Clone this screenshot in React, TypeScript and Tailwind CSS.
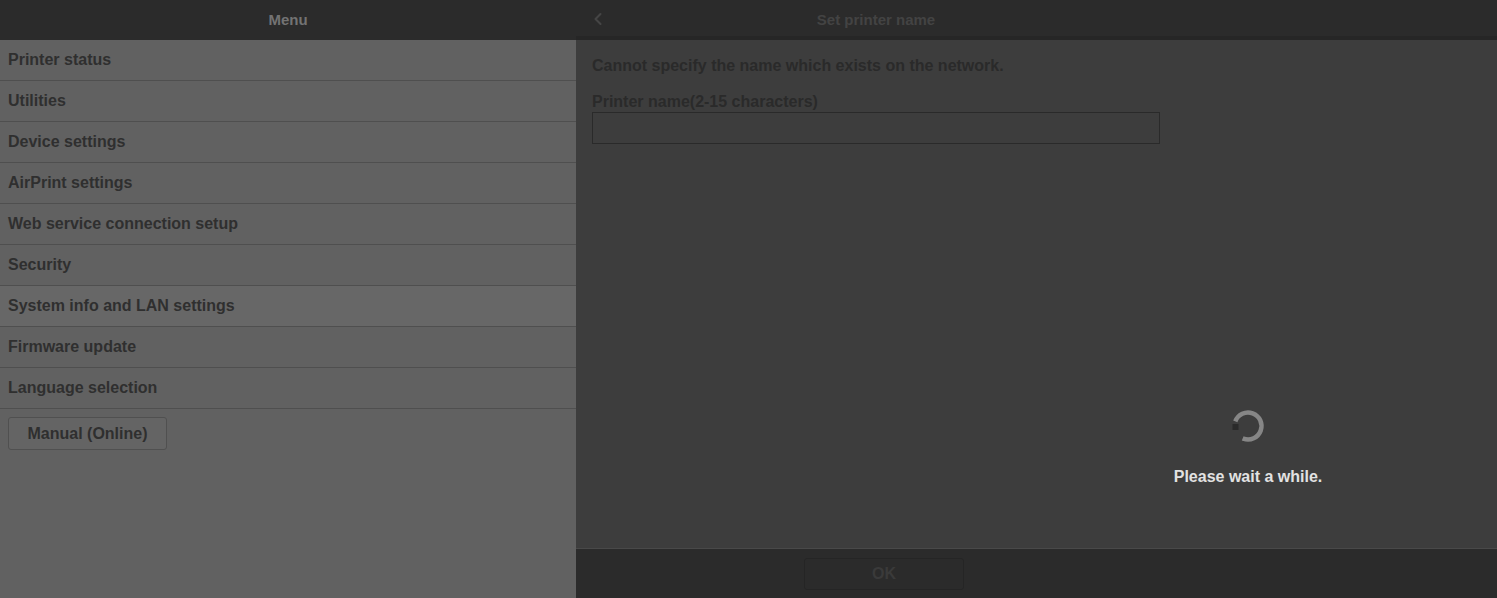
import { ChevronLeft } from "lucide-react"

const MENU = [
  "Printer status",
  "Utilities",
  "Device settings",
  "AirPrint settings",
  "Web service connection setup",
  "Security",
  "System info and LAN settings",
  "Firmware update",
  "Language selection",
]

export default function App() {
  return (
    <div
      className="flex h-[598px] w-[1497px] overflow-hidden text-[16px] font-bold"
      style={{ fontFamily: '"Liberation Sans", Arial, sans-serif' }}
    >
      {/* left menu */}
      <div className="flex w-[576px] shrink-0 flex-col bg-[#616161]">
        <div className="flex h-[40px] items-center justify-center bg-[#2b2b2b] text-[15px] text-[#737373]">
          Menu
        </div>
        {MENU.map((m, i) => (
          <div
            key={m}
            className={
              "flex h-[41px] items-center border-b border-[#4f4f4f] px-2 text-[#2f2f2f] " +
              (i === 6 ? "bg-[#676767]" : "bg-[#616161]")
            }
          >
            {m}
          </div>
        ))}
        <div className="px-2 pt-2">
          <button className="h-[33px] w-[159px] rounded-[3px] border border-[#505050] bg-[#646464] text-[16px] font-bold text-[#2f2f2f]">
            Manual (Online)
          </button>
        </div>
      </div>

      {/* right panel */}
      <div className="flex flex-1 flex-col bg-[#3d3d3d]">
        <div className="relative flex h-[40px] items-center bg-[#2b2b2b] text-[15px] text-[#434343] shadow-[inset_0_-4px_0_#262626]">
          <ChevronLeft className="absolute left-[12px] top-[9px] h-[20px] w-[20px] text-[#454545]" strokeWidth={2.5} />
          <div className="flex w-[600px] justify-center">Set printer name</div>
        </div>
        <div className="flex flex-1 flex-col px-4 pt-[17px] text-[#2a2a2a]">
          <div className="leading-[18px]">Cannot specify the name which exists on the network.</div>
          <div className="mt-[18px] leading-[18px]">Printer name(2-15 characters)</div>
          <div className="mt-[1px] h-[32px] w-[568px] border border-[#2a2a2a] bg-[#3d3d3d]" />
          <div className="flex flex-1 flex-col items-start justify-end pb-[62px] pl-[556px]">
            <div className="flex w-[200px] flex-col items-center">
              <svg width="36" height="36" viewBox="0 0 36 36">
                <circle cx="18" cy="18" r="13.5" fill="none" stroke="#868686" strokeWidth="4.5" strokeDasharray="64 21" transform="rotate(200 18 18)" />
                <rect x="2.5" y="16" width="6" height="6" fill="#2a2a2a" />
              </svg>
              <div className="mt-[24px] whitespace-nowrap leading-[18px] text-[#e2e2e2]">Please wait a while.</div>
            </div>
          </div>
        </div>
        <div className="flex h-[50px] items-center border-t border-[#494949] bg-[#2b2b2b] pl-[228px]">
          <div className="flex h-[32px] w-[160px] items-center justify-center rounded-[3px] border border-[#252525] text-[#3a3a3a]">
            OK
          </div>
        </div>
      </div>
    </div>
  )
}
